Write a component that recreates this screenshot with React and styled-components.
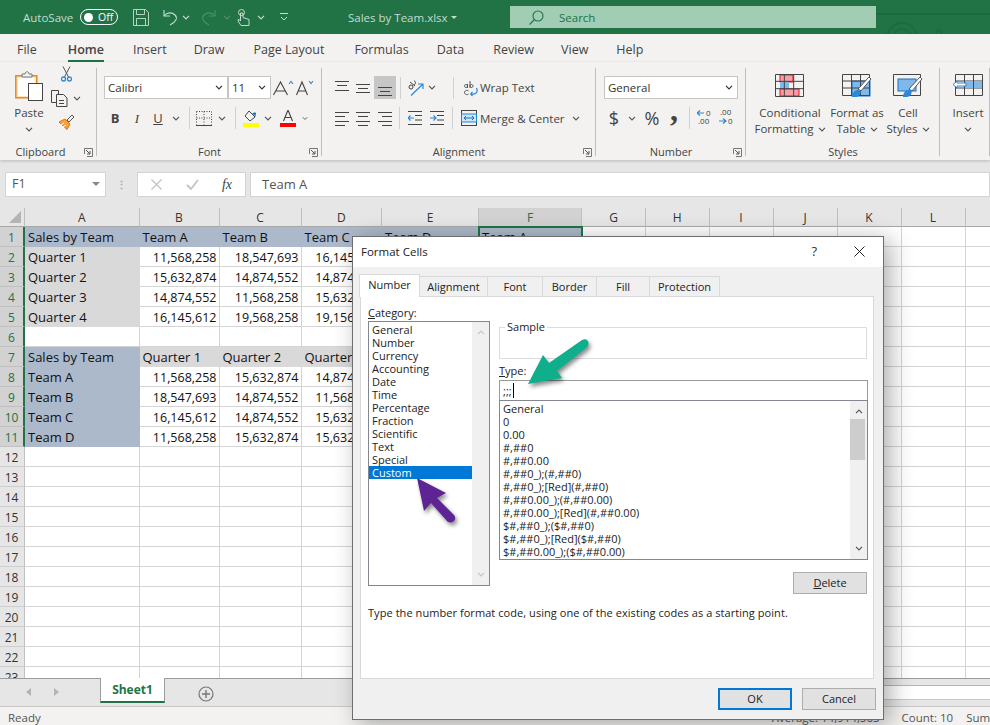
import React from 'react'
import styled, { createGlobalStyle } from 'styled-components'

const GlobalStyle = createGlobalStyle`
  html, body { margin: 0; padding: 0; background: #e6e6e6; }
  * { box-sizing: border-box; }
`

const UI_FONT = `"Open Sans", "Noto Sans", sans-serif`

const Page = styled.div`
  position: relative;
  width: 990px;
  height: 725px;
  overflow: hidden;
  display: flex;
  flex-direction: column;
  font-family: ${UI_FONT};
  background: #e6e6e6;
  color: #444;
`

/* title bar */
const TitleBar = styled.div`
  height: 34px;
  flex: none;
  background: #217346;
  display: flex;
  align-items: center;
  padding-left: 23px;
  color: #c4dccf;
  font-size: 11.5px;
`
const Slot = styled.div`
  width: ${({ $w }) => $w}px;
  flex: none;
  display: flex;
  align-items: center;
  justify-content: ${({ $start }) => ($start ? 'flex-start' : 'center')};
  white-space: nowrap;
`
const Toggle = styled.div`
  width: 38px;
  height: 16px;
  border: 1px solid #fff;
  border-radius: 8px;
  display: flex;
  align-items: center;
  padding-left: 3px;
  gap: 5px;
  color: #fff;
  font-size: 10.5px;
  &::before {
    content: '';
    width: 9px;
    height: 9px;
    border-radius: 50%;
    background: #fff;
  }
`
const FileCaret = styled.div`
  width: 0;
  height: 0;
  border-left: 3px solid transparent;
  border-right: 3px solid transparent;
  border-top: 3px solid #c4dccf;
`
const SearchBox = styled.div`
  width: 366px;
  height: 22px;
  background: #a0cdb4;
  color: #217346;
  display: flex;
  align-items: center;
  padding-left: 19px;
  gap: 15px;
  font-size: 11.5px;
  flex: none;
`

/* tabs */
const TabRow = styled.div`
  height: 28px;
  flex: none;
  background: #f3f2f1;
  display: flex;
  padding-left: 17px;
`
const Tab = styled.div`
  height: 28px;
  margin-right: ${({ $gap }) => $gap}px;
  display: flex;
  align-items: center;
  padding-top: 2px;
  font-size: 12.5px;
  font-weight: ${({ $active }) => ($active ? 600 : 400)};
  color: #444;
  position: relative;
  white-space: nowrap;
  &::after {
    content: '';
    display: ${({ $active }) => ($active ? 'block' : 'none')};
    position: absolute;
    left: 0;
    right: 0;
    bottom: 0;
    height: 2px;
    background: #217346;
  }
`

/* ribbon */
const Ribbon = styled.div`
  height: 98px;
  flex: none;
  background: #f3f2f1;
  display: flex;
  box-shadow: 0 1px 3px rgba(0, 0, 0, 0.2);
  position: relative;
  font-size: 11.5px;
`
const Group = styled.div`
  width: ${({ $w }) => $w}px;
  flex: none;
  position: relative;
  display: flex;
  flex-direction: column;
  &::after {
    content: '';
    position: absolute;
    right: 0;
    top: 6px;
    bottom: 4px;
    width: 1px;
    background: #bebebe;
  }
`
const GroupBody = styled.div`
  flex: 1;
  display: ${({ $row }) => ($row ? 'flex' : 'block')};
  padding-left: ${({ $pad }) => $pad || 0}px;
`
const GroupLabel = styled.div`
  height: 16px;
  line-height: 16px;
  text-align: center;
  font-size: 11px;
  padding-right: ${({ $shift }) => $shift || 0}px;
`
const Launcher = styled.svg`
  position: absolute;
  right: 4px;
  bottom: 3px;
`
const ToolRow = styled.div`
  display: flex;
  align-items: center;
  height: ${({ $h }) => $h}px;
  margin-top: ${({ $top }) => $top}px;
`
const Combo = styled.div`
  width: ${({ $w }) => $w}px;
  height: 23px;
  flex: none;
  background: #fff;
  border: 1px solid #c6c6c6;
  display: flex;
  align-items: center;
  justify-content: space-between;
  padding: 0 4px 0 3px;
  font-size: 11.5px;
  color: #333;
`
const Highlight = styled(Slot)`
  height: 23px;
  background: #c6c6c6;
`
const VSep = styled.div`
  width: 1px;
  height: 22px;
  background: #d0d0d0;
`
const BigBtn = styled.div`
  width: ${({ $w }) => $w}px;
  flex: none;
  display: flex;
  flex-direction: column;
  align-items: center;
  line-height: 16px;
  white-space: nowrap;
  font-size: 11.5px;
`
const BigIcon = styled.div`
  height: 43px;
  padding-top: ${({ $top }) => $top}px;
`
const BigLine = styled.div`
  height: 16px;
  display: flex;
  align-items: center;
  gap: 4px;
`
const ToolCol = styled.div`
  display: flex;
  flex-direction: column;
  align-items: center;
  margin-left: ${({ $left }) => $left}px;
`
const ToolCell = styled.div`
  height: 24px;
  display: flex;
  align-items: center;
  gap: 5px;
`
const Glyph = styled.span`
  font-family: ${({ $serif }) => ($serif ? '"Liberation Serif", serif' : UI_FONT)};
  font-size: ${({ $size }) => $size}px;
  font-weight: ${({ $bold }) => ($bold ? 700 : 400)};
  font-style: ${({ $italic }) => ($italic ? 'italic' : 'normal')};
  text-decoration: ${({ $under }) => ($under ? 'underline' : 'none')};
  color: #444;
  line-height: 1;
  margin-bottom: ${({ $lift }) => $lift || 0}px;
`

/* formula bar */
const FormulaArea = styled.div`
  height: 48px;
  flex: none;
  padding: 12px 0 11px 5px;
  display: flex;
`
const NameBox = styled.div`
  width: 101px;
  background: #fff;
  border: 1px solid #d4d4d4;
  display: flex;
  align-items: center;
  justify-content: space-between;
  padding: 0 5px 2px 6px;
  font-size: 12.5px;
  color: #555;
`
const Caret = styled.div`
  width: 0;
  height: 0;
  border-left: 4px solid transparent;
  border-right: 4px solid transparent;
  border-top: 4px solid #888;
`
const Dots = styled.div`
  width: 31px;
  display: flex;
  justify-content: center;
  align-items: center;
  color: #aaa;
  font-size: 11px;
  line-height: 1;
  font-weight: 700;
`
const FxBox = styled.div`
  width: 109px;
  background: #fff;
  border: 1px solid #d4d4d4;
  display: flex;
  align-items: center;
  color: #c4c4c4;
`
const FormulaInput = styled.div`
  flex: 1;
  margin-left: 4px;
  background: #fff;
  border: 1px solid #d4d4d4;
  display: flex;
  align-items: center;
  padding: 0 0 2px 11px;
  font-size: 13px;
  color: #555;
`

/* sheet */
const COLS = [114.5, 80, 82, 80.5, 97, 103, 64, 63.5, 64, 64, 64, 64, 64]
const Sheet = styled.div`
  flex: 1;
  min-height: 0;
  overflow: hidden;
  background: #fff;
  display: grid;
  grid-template-columns: 25px ${COLS.map((c) => `${c}px`).join(' ')};
  grid-auto-rows: 20px;
  grid-template-rows: 19px;
  align-content: start;
`
const Corner = styled.div`
  background: #e6e6e6;
  border-bottom: 1px solid #a8a8a8;
  border-right: 1px solid #c0c0c0;
  display: flex;
  align-items: flex-end;
  justify-content: flex-end;
  padding: 0 3px 3px 0;
  &::after {
    content: '';
    width: 0;
    height: 0;
    border-left: 12px solid transparent;
    border-bottom: 12px solid #b4b4b4;
  }
`
const ColHead = styled.div`
  background: ${({ $on }) => ($on ? '#d2d2d2' : '#e6e6e6')};
  color: ${({ $on }) => ($on ? '#217346' : '#333')};
  border-bottom: 1px solid #a8a8a8;
  border-right: 1px solid #c0c0c0;
  font-size: 12px;
  text-align: center;
  line-height: 19px;
`
const RowHead = styled.div`
  background: ${({ $on }) => ($on ? '#d2d2d2' : '#e6e6e6')};
  color: ${({ $on }) => ($on ? '#217346' : '#333')};
  border-bottom: 1px solid ${({ $on }) => ($on ? '#c0c0c0' : '#cfcfcf')};
  border-right: ${({ $on }) => ($on ? '2px solid #217346' : '1px solid #c0c0c0')};
  font-size: 12px;
  text-align: center;
  padding-right: ${({ $on }) => ($on ? 0 : 1)}px;
  line-height: 21px;
`
const Cell = styled.div`
  background: ${({ $fill }) => $fill || '#fff'};
  border-right: 1px solid ${({ $fill }) => $fill || '#d4d4d4'};
  border-bottom: 1px solid ${({ $fill }) => $fill || '#d4d4d4'};
  font-size: ${({ $num }) => ($num ? 12.5 : 13)}px;
  line-height: 21px;
  color: #111;
  text-align: ${({ $num }) => ($num ? 'right' : 'left')};
  padding: ${({ $num }) => ($num ? '0 2px 0 3px' : '0 3px')};
  white-space: nowrap;
  overflow: ${({ $clip }) => ($clip ? 'hidden' : 'visible')};
  outline: ${({ $sel }) => ($sel ? '2px solid #217346' : 'none')};
  outline-offset: -1px;
  z-index: ${({ $sel }) => ($sel ? 1 : 0)};
`

/* bottom bars */
const SheetBar = styled.div`
  height: 29px;
  flex: none;
  background: #e6e6e6;
  border-top: 1px solid #9c9c9c;
  border-bottom: 1px solid #c8c8c8;
  display: flex;
  position: relative;
`
const SheetNav = styled.div`
  width: 100px;
  display: flex;
  padding: 9px 0 0 26px;
  gap: 23px;
  align-items: flex-start;
`
const NavArrow = styled.div`
  width: 0;
  height: 0;
  border-top: 4px solid transparent;
  border-bottom: 4px solid transparent;
  ${({ $left }) => ($left ? 'border-right' : 'border-left')}: 5px solid #b4b4b4;
`
const SheetTab = styled.div`
  width: 65px;
  height: 25px;
  margin-top: -1px;
  background: #fff;
  border-left: 1px solid #9c9c9c;
  border-right: 1px solid #9c9c9c;
  border-bottom: 2px solid #217346;
  color: #217346;
  font-size: 12px;
  font-weight: 700;
  text-align: center;
  line-height: 24px;
`
const AddSheet = styled.div`
  margin: 6px 0 0 33px;
`
const HScroll = styled.div`
  margin: 6px 0 0 auto;
  width: 420px;
  height: 15px;
  background: #fff;
  border-top: 1px solid #b4b4b4;
  border-bottom: 1px solid #c8c8c8;
`
const StatusBar = styled.div`
  height: 18px;
  flex: none;
  background: #f3f2f1;
  display: flex;
  align-items: center;
  font-size: 11.5px;
  color: #555;
  padding-left: 8px;
  padding-top: 2px;
`
const StatusItem = styled.div`
  white-space: nowrap;
  margin-left: ${({ $left }) => $left || 0}px;
`

/* dialog */
const Dialog = styled.div`
  position: absolute;
  left: 352px;
  top: 236px;
  width: 532px;
  height: 484px;
  background: #f0f0f0;
  border: 1px solid #6d6d6d;
  box-shadow: 6px 4px 22px rgba(0, 0, 0, 0.32);
  display: flex;
  flex-direction: column;
  font-size: 11px;
  color: #222;
  z-index: 2;
`
const DialogTitle = styled.div`
  height: 30px;
  flex: none;
  background: #fff;
  display: flex;
  align-items: center;
  justify-content: space-between;
  padding: 0 18px 2px 8px;
  font-size: 11.5px;
`
const DialogControls = styled.div`
  display: flex;
  align-items: center;
  gap: 37px;
  color: #333;
  font-size: 13px;
`
const DTabs = styled.div`
  display: flex;
  align-items: flex-end;
  height: 29px;
  padding-left: 6px;
  flex: none;
`
const DTab = styled.div`
  width: ${({ $w }) => $w}px;
  height: ${({ $active }) => ($active ? 23 : 20)}px;
  background: ${({ $active }) => ($active ? '#fff' : '#f0f0f0')};
  border: 1px solid #d9d9d9;
  border-bottom: none;
  border-left-width: ${({ $first }) => ($first ? 1 : 0)}px;
  margin-bottom: ${({ $active }) => ($active ? -1 : 0)}px;
  text-align: center;
  line-height: 20px;
  position: relative;
  z-index: ${({ $active }) => ($active ? 1 : 0)};
`
const DPanel = styled.div`
  width: 514px;
  height: 383px;
  margin-left: 7px;
  background: #fff;
  border: 1px solid #d9d9d9;
  padding: 8px 0 0 7px;
  flex: none;
  display: flex;
  flex-direction: column;
`
const DColumns = styled.div`
  display: flex;
  height: 281px;
`
const LeftCol = styled.div`
  width: 131px;
  flex: none;
`
const RightCol = styled.div`
  width: 369px;
  flex: none;
  padding-top: 17px;
`
const FieldLabel = styled.div`
  height: 16px;
  line-height: 15px;
  margin-top: ${({ $top }) => $top || 0}px;
  margin-bottom: ${({ $bottom }) => $bottom || 0}px;
  & u { text-decoration: underline; text-underline-offset: 1px; }
`
const ListBox = styled.div`
  margin-top: ${({ $top }) => $top || 0}px;
  width: ${({ $w }) => $w}px;
  height: ${({ $h }) => $h}px;
  border: 1px solid #828790;
  display: flex;
  background: #fff;
`
const ListItems = styled.div`
  flex: 1;
  padding-top: ${({ $top }) => $top}px;
  min-width: 0;
`
const ListItem = styled.div`
  height: 13px;
  line-height: 13px;
  padding-left: ${({ $pad }) => $pad}px;
  white-space: nowrap;
  background: ${({ $on }) => ($on ? '#0078d7' : 'transparent')};
  color: ${({ $on }) => ($on ? '#fff' : '#222')};
`
const VScroll = styled.div`
  width: 17px;
  flex: none;
  background: #f0f0f0;
  display: flex;
  flex-direction: column;
  align-items: center;
  justify-content: space-between;
  padding: 8px 0;
  position: relative;
`
const Thumb = styled.div`
  position: absolute;
  left: 0;
  right: 2px;
  top: 18px;
  height: 41px;
  background: #cdcdcd;
`
const SampleBox = styled.fieldset`
  margin: 0;
  padding: 0;
  width: 368px;
  height: 37px;
  border: 1px solid #dcdcdc;
  & legend {
    padding: 0 2px;
    margin-left: 5px;
    font-size: 11px;
    line-height: 10px;
  }
`
const TypeInput = styled.div`
  width: 369px;
  height: 21px;
  border: 1px solid #9a9a9a;
  border-bottom-color: #7a7a7a;
  padding-left: 3px;
  line-height: 20px;
  font-size: 11px;
  display: flex;
  align-items: center;
  &::after {
    content: '';
    width: 1px;
    height: 15px;
    background: #000;
    margin-left: 1px;
  }
`
const DButton = styled.div`
  width: ${({ $w }) => $w}px;
  height: 22px;
  background: #e1e1e1;
  border: ${({ $primary }) => ($primary ? '2px solid #0078d7' : '1px solid #adadad')};
  text-align: center;
  line-height: ${({ $primary }) => ($primary ? 18 : 20)}px;
  flex: none;
  margin-left: ${({ $left }) => $left || 0}px;
  & u { text-decoration: underline; text-underline-offset: 1px; }
`
const DeleteRow = styled.div`
  display: flex;
  justify-content: flex-end;
  padding: 12px 1px 0 0;
`
const Help = styled.div`
  margin-top: 20px;
  line-height: 14px;
  letter-spacing: 0.06px;
`
const DFooter = styled.div`
  display: flex;
  justify-content: flex-end;
  padding: 9px 7px 0 0;
`
const Callout = styled.svg`
  position: absolute;
  left: ${({ $x }) => $x}px;
  top: ${({ $y }) => $y}px;
  z-index: 3;
  filter: drop-shadow(2px 3px 2px rgba(0, 0, 0, 0.45));
`

/* icons */
const Chev = ({ c = '#555', up }) => (
  <svg width='8' height='5' viewBox='0 0 8 5'>
    <path d={up ? 'M1 4.200l3-3 3 3' : 'M1 .8l3 3 3-3'} fill='none' stroke={c} strokeWidth='1.2' />
  </svg>
)
const LauncherIcon = () => (
  <Launcher width='9' height='9' viewBox='0 0 9 9'>
    <path d='M.5 6V.5h8v8H3' fill='none' stroke='#777' />
    <path d='M2 2l4 4M6 3v3H3' fill='none' stroke='#555' />
  </Launcher>
)
const Lines = ({ rows, w = 14, h = 20 }) => (
  <svg width={w} height={h} viewBox={`0 0 ${w} ${h}`}>
    {rows.map(([a, b, y]) => (
      <path key={`${a}${y}`} d={`M${a} ${y}.5H${b}`} stroke='#444' />
    ))}
  </svg>
)
const VT = [[0, 14, 3], [2, 12, 7], [0, 14, 12]]
const VM = [[0, 14, 6], [2, 12, 10], [0, 14, 14]]
const VB = [[0, 14, 9], [2, 12, 13], [0, 14, 17]]
const HL = [[0, 14, 4], [0, 10, 8], [0, 14, 13], [0, 10, 17]]
const HC = [[0, 14, 4], [2, 12, 8], [0, 14, 13], [2, 12, 17]]
const HR = [[0, 14, 4], [4, 14, 8], [0, 14, 13], [4, 14, 17]]

const SaveIcon = () => (
  <svg width='16' height='17' viewBox='0 0 16 17' fill='none' stroke='#b5d5c3'>
    <path d='M.5.500h12l3 3v13H.5z' />
    <path d='M3.500.500v5h8v-5M3.500 16.500v-7h9v7' />
  </svg>
)
const UndoIcon = ({ c = '#c4dccf', flip }) => (
  <svg width='15' height='17' viewBox='0 0 15 17' fill='none' stroke={c} strokeWidth='1.1' transform={flip ? 'scale(-1,1)' : undefined}>
    <path d='M1 1v6h6' />
    <path d='M1 7c3-4 8-4 11-1 3 3 1 7-5 10' />
  </svg>
)
const TouchIcon = () => (
  <svg width='13' height='17' viewBox='0 0 13 17' fill='none' stroke='#c4dccf'>
    <circle cx='4.500' cy='3.500' r='3' />
    <path d='M3.500 4v8L1.500 10 1 12l3 4.500h8v-6L6 8.500V4z' />
  </svg>
)
const QatIcon = () => (
  <svg width='8' height='8' viewBox='0 0 8 8' fill='none' stroke='#c4dccf'>
    <path d='M0 .5h8M1 4l3 3 3-3' />
  </svg>
)
const SearchIcon = () => (
  <svg width='15' height='15' viewBox='0 0 15 15' fill='none' stroke='#217346' strokeWidth='1.1'>
    <circle cx='9' cy='6' r='5' />
    <path d='M5.500 9.500L.5 14.500' />
  </svg>
)
const TitleArt = () => (
  <svg width='114' height='34' viewBox='0 0 114 34' fill='none' stroke='#1e6a40' strokeWidth='2'>
    <path d='M0 14h114' />
    <circle cx='26' cy='38' r='15' />
    <circle cx='26' cy='38' r='9' />
    <path d='M60 34c0-5 6-5 6 0' />
  </svg>
)
const PasteIcon = () => (
  <svg width='29' height='32' viewBox='0 0 29 32'>
    <rect x='.8' y='5.800' width='21' height='22' fill='#fbe6bf' stroke='#e8871e' strokeWidth='1.500' />
    <rect x='3' y='8' width='16.500' height='18' fill='#fff' />
    <path d='M7 7V4h3c0-3 4-3 4 0h3v3z' fill='#f3f2f1' stroke='#777' />
    <rect x='13.500' y='13.500' width='14' height='17' fill='#fff' stroke='#444' />
  </svg>
)
const CutIcon = () => (
  <svg width='11' height='16' viewBox='0 0 11 16' fill='none'>
    <path d='M2 .5l5.500 10.500M9 .5L3.500 11' stroke='#555' />
    <circle cx='2.500' cy='13' r='2' stroke='#2b88d8' strokeWidth='1.300' />
    <circle cx='8.500' cy='13' r='2' stroke='#2b88d8' strokeWidth='1.300' />
  </svg>
)
const CopyIcon = () => (
  <svg width='17' height='17' viewBox='0 0 17 17' fill='#f3f2f1' stroke='#444'>
    <path d='M.5.500h7v12h-7z' />
    <path d='M5.500 4.500h7l3.500 3.500v8.500H5.500z' />
    <path d='M8 10.500h5M8 13.500h5' />
  </svg>
)
const PainterIcon = () => (
  <svg width='17' height='16' viewBox='0 0 17 16'>
    <path d='M1 8l6-3 5 5-3 5.500z' fill='#f7a23b' stroke='#d9731a' />
    <path d='M3 11l3-2M5 13l3-2' stroke='#fff' />
    <path d='M9 6l5-5 2 2-5 5z' fill='#f3f2f1' stroke='#555' />
  </svg>
)
const GrowIcon = ({ size, up }) => (
  <svg width={size + 6} height='16' viewBox={`0 0 ${size + 6} 16`} fill='none'>
    <path d={`M.5 15L${size / 2} 2l${size / 2 - 0.5} 13M${size * 0.2} 11h${size * 0.6}`} stroke='#444' strokeWidth='1.100' />
    <path d={up ? `M${size + 1} 4l2-2.500 2 2.500` : `M${size + 1} 1l2 2.500 2-2.500`} stroke='#2b88d8' strokeWidth='1.100' />
  </svg>
)
const BorderIcon = () => (
  <svg width='16' height='15' viewBox='0 0 16 15' fill='none' stroke='#444'>
    <path d='M.5.500h15M.5.500v13M15.500.500v13M8 .5v13M.5 7h15' strokeDasharray='1 1.500' />
    <path d='M0 14.500h16' />
  </svg>
)
const FillIcon = () => (
  <svg width='16' height='17' viewBox='0 0 16 17'>
    <path d='M6 1l-4 5 5 5 5-4z' fill='#f3f2f1' stroke='#444' />
    <path d='M13 3c-2-1-4 0-4 2l2-.5 1.500 2.500z' fill='#1b6fb8' />
    <rect y='13' width='16' height='4' fill='#ffff00' />
  </svg>
)
const FontColorIcon = () => (
  <svg width='16' height='17' viewBox='0 0 16 17' fill='none'>
    <path d='M3.500 11L8 0l4.500 11M5 7.500h6' stroke='#444' strokeWidth='1.100' />
    <rect y='13' width='16' height='4' fill='#ff0000' />
  </svg>
)
const OrientIcon = () => (
  <svg width='16' height='16' viewBox='0 0 16 16' fill='none'>
    <g stroke='#444'>
      <circle cx='3' cy='7' r='2' />
      <path d='M2 2l5 4M6 1c2 0 2 3 0 4' />
    </g>
    <path d='M3 15.500L15 4M10 4h5v5' stroke='#2b88d8' strokeWidth='1.200' />
  </svg>
)
const IndentIcon = ({ flip }) => (
  <svg width='14' height='14' viewBox='0 0 14 14' fill='none'>
    <path d='M0 .5h14M7 4.500h7M7 9h7M0 13.500h14' stroke='#444' />
    <path d={flip ? 'M0 7h6M3.500 4.500L6 7 3.500 9.500' : 'M6 7H0M2.500 4.500L0 7l2.500 2.500'} stroke='#2b88d8' strokeWidth='1.200' />
  </svg>
)
const WrapIcon = () => (
  <svg width='15' height='18' viewBox='0 0 15 18' fill='none'>
    <path d='M6.500 15c5 1 8-2 6-6M6.500 15l2-2M6.500 15l2 2' stroke='#2b88d8' strokeWidth='1.200' />
    <path d='M3.500 7c0-2-3-2-3 0s3 2 3 0zM3.500 5v4M6 2v7M6 7c0-2 3-2 3 0s-3 2-3 0M4.500 12c-2-1.500-4 0-4 1.500s2 3 4 1.500' stroke='#444' strokeWidth='.9' />
  </svg>
)
const MergeIcon = () => (
  <svg width='16' height='16' viewBox='0 0 16 16' fill='none'>
    <rect x='.5' y='.5' width='15' height='15' stroke='#444' />
    <rect x='.5' y='4' width='15' height='8' fill='#cfe4f7' stroke='#1b8ad6' />
    <path d='M3 8h10M5 6L3 8l2 2M11 6l2 2-2 2' stroke='#1b6fb8' />
  </svg>
)
const DecimalIcon = ({ more }) => (
  <svg width='16' height='20' viewBox='0 0 16 20' fill='none'>
    <path d={more ? 'M0 13h7M4 10.500L7 13l-3 2.500' : 'M7 5H0M3 2.500L0 5l3 2.500'} stroke='#2b88d8' strokeWidth='1.200' />
    <text x={more ? 1 : 9} y={more ? 7 : 8} fontSize='8' fontFamily='Open Sans, sans-serif' fill='#444'>{more ? '.00' : '0'}</text>
    <text x={more ? 9 : 1} y='16' fontSize='8' fontFamily='Open Sans, sans-serif' fill='#444'>{more ? '0' : '.00'}</text>
  </svg>
)
const TableBase = ({ children, w = 28, h = 22 }) => (
  <svg width={w + 2} height={h + 2} viewBox={`0 0 ${w + 2} ${h + 2}`} fill='none'>
    {children}
    <path d={`M.5 .5h${w}v${h}H.5zM.5 ${h / 3}h${w}M.5 ${(2 * h) / 3}h${w}M${w / 3} .5v${h}M${(2 * w) / 3} .5v${h}`} stroke='#444' />
  </svg>
)
const CondIcon = () => (
  <TableBase>
    <rect x='5' y='1' width='13' height='7' fill='#f7a0a8' stroke='#e81123' />
    <rect x='5' y='8' width='9' height='7' fill='#7fb8ea' />
    <rect x='5' y='15' width='19' height='7' fill='#f7a0a8' stroke='#e81123' />
  </TableBase>
)
const Brush = () => (
  <>
    <path d='M16 15L27 3l2 2-10 12z' fill='#fff' stroke='#555' />
    <path d='M10 23c0-5 4-8 8-7 2 3-1 7-4 7z' fill='#2b88d8' />
  </>
)
const FormatTableIcon = () => (
  <svg width='31' height='26' viewBox='0 0 31 26' fill='none'>
    <rect x='10' y='7' width='18' height='15' fill='#7fb8ea' stroke='#1b6fb8' />
    <path d='M.5 .5h27v21H.5zM.5 7h27M.5 14h27M9.500 .5v21M18.500 .5v21' stroke='#444' />
    <Brush />
  </svg>
)
const CellStylesIcon = () => (
  <svg width='31' height='26' viewBox='0 0 31 26' fill='none'>
    <path d='M.5 .5h27v21H.5z' stroke='#444' />
    <rect x='5' y='5' width='18' height='12' fill='#7fb8ea' stroke='#1b6fb8' />
    <Brush />
  </svg>
)
const InsertIcon = () => (
  <svg width='33' height='24' viewBox='0 0 33 24' fill='none'>
    <path d='M3.500 .5h27v21h-27zM3.500 7h27M3.500 14h27M12.500 .5v21M21.500 .5v21' stroke='#444' />
    <rect x='13' y='7' width='8' height='7' fill='#7fb8ea' />
    <rect x='22' y='7' width='8' height='7' fill='#7fb8ea' />
    <path d='M14 9H5V7L1 10.500 5 14v-2h9z' fill='#fff' stroke='#2b88d8' />
  </svg>
)

/* data */
const TABS = [
  ['File', 31], ['Home', 29], ['Insert', 27], ['Draw', 29], ['Page Layout', 30],
  ['Formulas', 28], ['Data', 29], ['Review', 27], ['View', 28], ['Help', 0],
]
const LETTERS = 'ABCDEFGHIJKLM'.split('')
const SLATE = '#acb9ca'
const GREY = '#d9d9d9'
const ROWS = [
  { fill: SLATE, first: SLATE, cells: ['Sales by Team', 'Team A', 'Team B', 'Team C', 'Team D', 'Team A'], text: true },
  { first: GREY, cells: ['Quarter 1', '11,568,258', '18,547,693', '16,145,612'] },
  { first: GREY, cells: ['Quarter 2', '15,632,874', '14,874,552', '14,874,552'] },
  { first: GREY, cells: ['Quarter 3', '14,874,552', '11,568,258', '15,632,874'] },
  { first: GREY, cells: ['Quarter 4', '16,145,612', '19,568,258', '19,156,258'] },
  { cells: [] },
  { fill: GREY, first: SLATE, cells: ['Sales by Team', 'Quarter 1', 'Quarter 2', 'Quarter 3', 'Quarter 4'], text: true },
  { first: SLATE, cells: ['Team A', '11,568,258', '15,632,874', '14,874,552'] },
  { first: SLATE, cells: ['Team B', '18,547,693', '14,874,552', '11,568,258'] },
  { first: SLATE, cells: ['Team C', '16,145,612', '14,874,552', '15,632,874'] },
  { first: SLATE, cells: ['Team D', '11,568,258', '15,632,874', '15,632,874'] },
]
const CATEGORIES = ['General', 'Number', 'Currency', 'Accounting', 'Date', 'Time', 'Percentage', 'Fraction', 'Scientific', 'Text', 'Special', 'Custom']
const FORMATS = [
  'General', '0', '0.00', '#,##0', '#,##0.00', '#,##0_);(#,##0)', '#,##0_);[Red](#,##0)',
  '#,##0.00_);(#,##0.00)', '#,##0.00_);[Red](#,##0.00)', '$#,##0_);($#,##0)',
  '$#,##0_);[Red]($#,##0)', '$#,##0.00_);($#,##0.00)',
]
const DTABS = [['Number', 61], ['Alignment', 68], ['Font', 55], ['Border', 54], ['Fill', 53], ['Protection', 70]]

const fillFor = (row, c) => {
  if (c === 0) return row.first
  if (row.fill && c < 6) return row.fill
  return undefined
}

const SheetGrid = () => (
  <Sheet>
    <Corner />
    {LETTERS.map((l) => <ColHead key={l} $on={l === 'F'}>{l === 'M' ? '' : l}</ColHead>)}
    {Array.from({ length: 23 }, (_, r) => {
      const row = ROWS[r] || { cells: [] }
      return (
        <React.Fragment key={r}>
          <RowHead $on={r < 11}>{r + 1}</RowHead>
          {LETTERS.map((l, c) => (
            <Cell
              key={l}
              $fill={fillFor(row, c)}
              $num={!row.text && c > 0}
              $clip={c > 0}
              $sel={r === 0 && l === 'F'}
            >
              {row.cells[c]}
            </Cell>
          ))}
        </React.Fragment>
      )
    })}
  </Sheet>
)

const FormatCells = () => (
  <Dialog>
    <DialogTitle>
      Format Cells
      <DialogControls>
        <span>?</span>
        <svg width='11' height='11' viewBox='0 0 11 11' stroke='#222'>
          <path d='M.5.500l10 10M10.500.500l-10 10' />
        </svg>
      </DialogControls>
    </DialogTitle>
    <DTabs>
      {DTABS.map(([t, w], i) => (
        <DTab key={t} $w={w} $active={i === 0} $first={i === 0}>{t}</DTab>
      ))}
    </DTabs>
    <DPanel>
      <DColumns>
        <LeftCol>
          <FieldLabel><u>C</u>ategory:</FieldLabel>
          <ListBox $w={122} $h={265}>
            <ListItems $top={1}>
              {CATEGORIES.map((c) => (
                <ListItem key={c} $pad={3} $on={c === 'Custom'}>{c}</ListItem>
              ))}
            </ListItems>
            <VScroll>
              <Chev c='#c4c4c4' up />
              <Chev c='#c4c4c4' />
            </VScroll>
          </ListBox>
        </LeftCol>
        <RightCol>
          <SampleBox><legend>Sample</legend></SampleBox>
          <FieldLabel $top={4} $bottom={1}><u>T</u>ype:</FieldLabel>
          <TypeInput>;;;</TypeInput>
          <ListBox $w={369} $h={160} $top={-1}>
            <ListItems $top={1}>
              {FORMATS.map((f) => <ListItem key={f} $pad={3}>{f}</ListItem>)}
            </ListItems>
            <VScroll>
              <Chev c='#555' up />
              <Thumb />
              <Chev c='#555' />
            </VScroll>
          </ListBox>
          <DeleteRow><DButton $w={74}><u>D</u>elete</DButton></DeleteRow>
        </RightCol>
      </DColumns>
      <Help>Type the number format code, using one of the existing codes as a starting point.</Help>
    </DPanel>
    <DFooter>
      <DButton $w={74} $primary>OK</DButton>
      <DButton $w={74} $left={10}>Cancel</DButton>
    </DFooter>
  </Dialog>
)

export default function App() {
  return (
    <Page>
      <GlobalStyle />
      <TitleBar>
        <Slot $w={57} $start>AutoSave</Slot>
        <Toggle>Off</Toggle>
        <Slot $w={15} />
        <SaveIcon />
        <Slot $w={14} />
        <UndoIcon />
        <Slot $w={16}><Chev c='#c4dccf' /></Slot>
        <Slot $w={7} />
        <UndoIcon c='#4e9069' flip />
        <Slot $w={21}><Chev c='#4e9069' /></Slot>
        <TouchIcon />
        <Slot $w={22}><Chev c='#c4dccf' /></Slot>
        <Slot $w={8} />
        <QatIcon />
        <Slot $w={60} />
        <Slot $w={96} $start>Sales by Team.xlsx</Slot>
        <Slot $w={20}><FileCaret /></Slot>
        <Slot $w={46} />
        <SearchBox><SearchIcon />Search</SearchBox>
        <TitleArt />
      </TitleBar>

      <TabRow>
        {TABS.map(([t, gap]) => <Tab key={t} $gap={gap} $active={t === 'Home'}>{t}</Tab>)}
      </TabRow>

      <Ribbon>
        <Group $w={97}>
          <GroupBody $row $pad={14}>
            <BigBtn $w={30}>
              <BigIcon $top={8}><PasteIcon /></BigIcon>
              Paste
              <BigLine><Chev /></BigLine>
            </BigBtn>
            <ToolCol $left={7}>
              <ToolCell><Slot $w={18}><CutIcon /></Slot></ToolCell>
              <ToolCell><CopyIcon /><Chev /></ToolCell>
              <ToolCell><Slot $w={18}><PainterIcon /></Slot></ToolCell>
            </ToolCol>
          </GroupBody>
          <GroupLabel $shift={16}>Clipboard</GroupLabel>
          <LauncherIcon />
        </Group>

        <Group $w={225}>
          <GroupBody $pad={7}>
            <ToolRow $h={23} $top={14}>
              <Combo $w={124}>Calibri<Chev c='#333' /></Combo>
              <Combo $w={43}>11<Chev c='#333' /></Combo>
              <Slot $w={2} />
              <GrowIcon size={15} up />
              <Slot $w={2} />
              <GrowIcon size={12} />
            </ToolRow>
            <ToolRow $h={24} $top={7}>
              <Slot $w={22}><Glyph $size={13} $bold>B</Glyph></Slot>
              <Slot $w={22}><Glyph $size={13} $italic $serif>I</Glyph></Slot>
              <Slot $w={20}><Glyph $size={13} $under>U</Glyph></Slot>
              <Slot $w={16}><Chev /></Slot>
              <Slot $w={10}><VSep /></Slot>
              <Slot $w={20}><BorderIcon /></Slot>
              <Slot $w={16}><Chev /></Slot>
              <Slot $w={10}><VSep /></Slot>
              <Slot $w={22}><FillIcon /></Slot>
              <Slot $w={12}><Chev /></Slot>
              <Slot $w={28}><FontColorIcon /></Slot>
              <Slot $w={6}><Chev /></Slot>
            </ToolRow>
          </GroupBody>
          <GroupLabel>Font</GroupLabel>
          <LauncherIcon />
        </Group>

        <Group $w={274}>
          <GroupBody $pad={9}>
            <ToolRow $h={23} $top={14}>
              <Slot $w={21}><Lines rows={VT} /></Slot>
              <Slot $w={22}><Lines rows={VM} /></Slot>
              <Highlight $w={22}><Lines rows={VB} /></Highlight>
              <Slot $w={8}><VSep /></Slot>
              <Slot $w={24}><OrientIcon /></Slot>
              <Slot $w={8}><Chev /></Slot>
              <Slot $w={14} />
              <Slot $w={7}><VSep /></Slot>
              <Slot $w={6} />
              <Slot $w={16}><WrapIcon /></Slot>
              <Slot $w={1} />
              Wrap Text
            </ToolRow>
            <ToolRow $h={24} $top={7}>
              <Slot $w={21}><Lines rows={HL} /></Slot>
              <Slot $w={22}><Lines rows={HC} /></Slot>
              <Slot $w={21}><Lines rows={HR} /></Slot>
              <Slot $w={9}><VSep /></Slot>
              <Slot $w={22}><IndentIcon /></Slot>
              <Slot $w={22}><IndentIcon flip /></Slot>
              <Slot $w={9}><VSep /></Slot>
              <Slot $w={4} />
              <Slot $w={16}><MergeIcon /></Slot>
              <Slot $w={3} />
              Merge &amp; Center
              <Slot $w={23}><Chev /></Slot>
            </ToolRow>
          </GroupBody>
          <GroupLabel>Alignment</GroupLabel>
          <LauncherIcon />
        </Group>

        <Group $w={150}>
          <GroupBody $pad={8}>
            <ToolRow $h={23} $top={14}>
              <Combo $w={134}>General<Chev c='#333' /></Combo>
            </ToolRow>
            <ToolRow $h={24} $top={7}>
              <Slot $w={20}><Glyph $size={18}>$</Glyph></Slot>
              <Slot $w={16}><Chev /></Slot>
              <Slot $w={24}><Glyph $size={18}>%</Glyph></Slot>
              <Slot $w={20}><Glyph $size={32} $bold $serif $lift={16}>,</Glyph></Slot>
              <Slot $w={10}><VSep /></Slot>
              <Slot $w={22}><DecimalIcon more={false} /></Slot>
              <Slot $w={22}><DecimalIcon more /></Slot>
            </ToolRow>
          </GroupBody>
          <GroupLabel>Number</GroupLabel>
          <LauncherIcon />
        </Group>

        <Group $w={194}>
          <GroupBody $row>
            <BigBtn $w={88}>
              <BigIcon $top={12}><CondIcon /></BigIcon>
              Conditional
              <BigLine>Formatting <Chev /></BigLine>
            </BigBtn>
            <BigBtn $w={46}>
              <BigIcon $top={12}><FormatTableIcon /></BigIcon>
              Format as
              <BigLine>Table <Chev /></BigLine>
            </BigBtn>
            <BigBtn $w={56}>
              <BigIcon $top={12}><CellStylesIcon /></BigIcon>
              Cell
              <BigLine>Styles <Chev /></BigLine>
            </BigBtn>
          </GroupBody>
          <GroupLabel>Styles</GroupLabel>
        </Group>

        <Group $w={50}>
          <GroupBody $row>
            <BigBtn $w={56}>
              <BigIcon $top={12}><InsertIcon /></BigIcon>
              Insert
              <BigLine><Chev /></BigLine>
            </BigBtn>
          </GroupBody>
          <GroupLabel />
        </Group>
      </Ribbon>

      <FormulaArea>
        <NameBox>F1<Caret /></NameBox>
        <Dots>⋮</Dots>
        <FxBox>
          <Slot $w={37}>
            <svg width='11' height='11' viewBox='0 0 11 11' stroke='#c4c4c4' strokeWidth='1.400'>
              <path d='M.5.500l10 10M10.500.500l-10 10' />
            </svg>
          </Slot>
          <Slot $w={34}>
            <svg width='13' height='11' viewBox='0 0 13 11' fill='none' stroke='#c4c4c4' strokeWidth='1.800'>
              <path d='M1 6l4 4 7-9' />
            </svg>
          </Slot>
          <Slot $w={36}><Glyph $size={14} $italic $serif>fx</Glyph></Slot>
        </FxBox>
        <FormulaInput>Team A</FormulaInput>
      </FormulaArea>

      <SheetGrid />

      <SheetBar>
        <SheetNav><NavArrow $left /><NavArrow /></SheetNav>
        <SheetTab>Sheet1</SheetTab>
        <AddSheet>
          <svg width='16' height='16' viewBox='0 0 16 16' fill='none' stroke='#777'>
            <circle cx='8' cy='8' r='7' strokeWidth='1.200' />
            <path d='M4 8h8M8 4v8' strokeWidth='1.400' />
          </svg>
        </AddSheet>
        <HScroll />
      </SheetBar>
      <StatusBar>
        <StatusItem>Ready</StatusItem>
        <StatusItem $left={731}>Average: 14,914,563</StatusItem>
        <StatusItem $left={22}>Count: 10</StatusItem>
        <StatusItem $left={13}>Sum:</StatusItem>
      </StatusBar>

      <FormatCells />

      <Callout $x={520} $y={332} width='72' height='60' viewBox='0 0 72 60'>
        <path d='M8 52l15-29 6 8L62 8c6-3 9 4 4 8L37 39l5 7z' fill='#0fae8c' />
      </Callout>
      <Callout $x={410} $y={472} width='50' height='56' viewBox='0 0 50 56'>
        <path d='M7 6l29 15-9 5 17 17c4 5-3 10-7 6L21 31l-7 8z' fill='#5f2494' />
      </Callout>
    </Page>
  )
}
